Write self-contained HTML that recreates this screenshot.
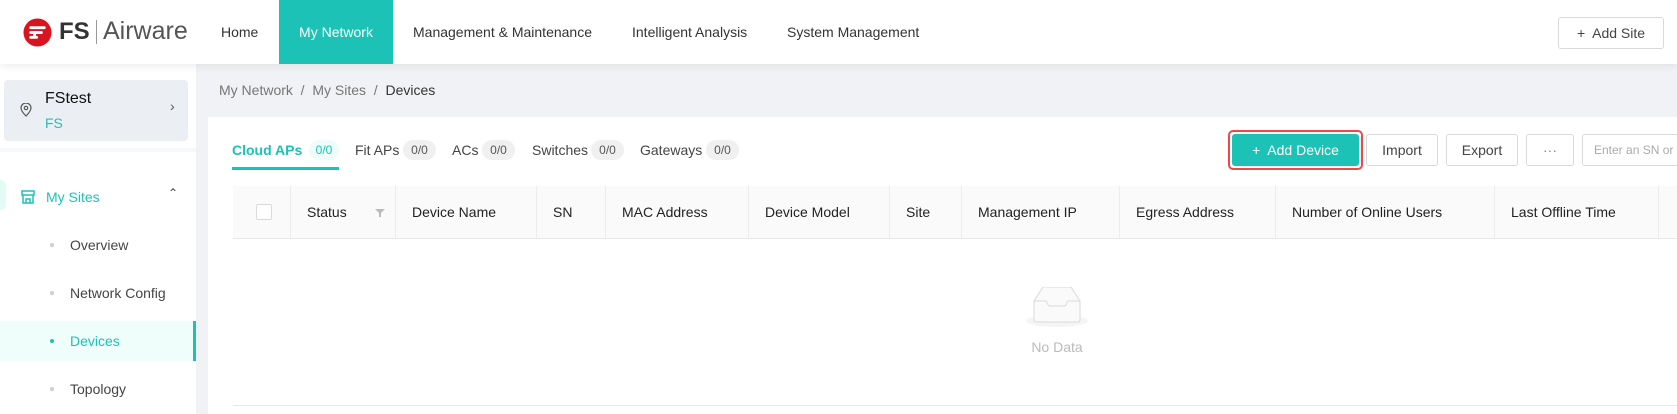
<!DOCTYPE html>
<html><head><meta charset="utf-8"><style>
*{box-sizing:border-box;margin:0;padding:0}
body{width:1677px;height:414px;overflow:hidden;background:#f0f2f5;font-family:"Liberation Sans",Arial,sans-serif;position:relative;color:#333}
.a{position:absolute}
.hdr{left:0;top:0;width:1677px;height:64px;background:#fff;box-shadow:0 2px 8px rgba(0,0,0,.08);z-index:3}
.nav{top:0;height:64px;line-height:64px;font-size:14px;color:#333}
.side{left:0;top:64px;width:196px;height:350px;background:#fff}
.card{left:208px;top:117px;width:1469px;height:297px;background:#fff}
.tab{top:140px;height:20px;line-height:20px;font-size:14px;color:#444}
.bdg{top:140px;height:20px;line-height:20px;font-size:12px;background:#f0f0f0;border-radius:10px;text-align:center;color:#555}
.btn{top:134px;height:32px;line-height:30px;border:1px solid #d9d9d9;border-radius:3px;background:#fff;text-align:center;font-size:14px;color:#444}
.th{top:186px;height:53px;line-height:53px;font-size:14px;color:#222;padding-left:16px;border-right:1px solid #ececec}
.mi{font-size:14px;color:#444}
.dot{width:4px;height:4px;border-radius:2px;background:#ccd;left:50px}
</style></head><body>
<div class="a hdr">
  <svg class="a" style="left:23px;top:18px" width="29" height="29" viewBox="0 0 30 30"><circle cx="15" cy="15" r="14.5" fill="#d7141f"/><path d="M8 10h14M8 15h11M8 20h6" stroke="#fff" stroke-width="3" stroke-linecap="round"/><path d="M12 15v6" stroke="#fff" stroke-width="3"/></svg>
  <div class="a" style="left:59px;top:18px;font-size:24px;font-weight:bold;color:#333;line-height:28px">FS</div>
  <div class="a" style="left:96px;top:20px;width:1px;height:24px;background:#999"></div>
  <div class="a" style="left:103px;top:17px;font-size:25px;color:#555;line-height:28px">Airware</div>
  <div class="a nav" style="left:221px">Home</div>
  <div class="a nav" style="left:279px;width:114px;background:#1cc2b5;color:#fff;text-align:center">My Network</div>
  <div class="a nav" style="left:413px">Management &amp; Maintenance</div>
  <div class="a nav" style="left:632px">Intelligent Analysis</div>
  <div class="a nav" style="left:787px">System Management</div>
  <div class="a btn" style="left:1558px;top:17px;width:106px;height:32px;line-height:30px">+&nbsp; Add Site</div>
</div>
<div class="a side">
  <div class="a" style="left:4px;top:16px;width:184px;height:61px;background:#ebeff3;border-radius:4px"></div>
  <svg class="a" style="left:20px;top:39px" width="12" height="14" viewBox="0 0 12 14"><path d="M6 13C2 9 1 7 1 5a5 5 0 0110 0c0 2-1 4-5 8z" fill="none" stroke="#555" stroke-width="1.2"/><circle cx="6" cy="5" r="1.7" fill="none" stroke="#555" stroke-width="1.2"/></svg>
  <div class="a" style="left:45px;top:26px;font-size:16px;color:#111">FStest</div>
  <div class="a" style="left:45px;top:51px;font-size:14px;color:#1cc2b5">FS</div>
  <div class="a" style="left:170px;top:34px;font-size:14px;color:#555">&#8250;</div>
  <div class="a" style="left:0;top:84px;width:196px;height:4px;background:#f7f8fa"></div>
  <svg class="a" style="left:21px;top:126px" width="14" height="14" viewBox="0 0 14 14"><path d="M1 1h12v4H1zM2 5v8h10V5M5 13V9h4v4" fill="none" stroke="#1cc2b5" stroke-width="1.5"/></svg>
  <div class="a" style="left:46px;top:125px;font-size:14px;color:#1cc2b5">My Sites</div>
  <div class="a" style="left:168px;top:122px;font-size:12px;color:#444">&#8963;</div>
  <div class="a dot" style="top:179px"></div><div class="a mi" style="left:70px;top:173px">Overview</div>
  <div class="a dot" style="top:227px"></div><div class="a mi" style="left:70px;top:221px">Network Config</div>
  <div class="a" style="left:0;top:257px;width:196px;height:40px;background:#effdfb"></div>
  <div class="a" style="left:193px;top:257px;width:3px;height:40px;background:#1cc2b5"></div>
  <div class="a dot" style="top:275px;background:#1cc2b5"></div><div class="a mi" style="left:70px;top:269px;color:#1cc2b5">Devices</div>
  <div class="a dot" style="top:323px"></div><div class="a mi" style="left:70px;top:317px">Topology</div>
</div>
<div class="a" style="left:0;top:180px;width:6px;height:30px;border-radius:0 15px 15px 0;background:#e2fbf5"></div>
<div class="a" style="left:219px;top:82px;font-size:14px;color:#777">My Network &nbsp;/&nbsp; My Sites &nbsp;/&nbsp; <span style="color:#333">Devices</span></div>
<div class="a card"></div>
<div class="a tab" style="left:232px;color:#1cc2b5;font-weight:bold">Cloud APs</div>
<div class="a bdg" style="left:309px;width:30px;background:#eefcfa;color:#1cc2b5">0/0</div>
<div class="a" style="left:232px;top:167px;width:107px;height:3px;background:#1cc2b5"></div>
<div class="a tab" style="left:355px">Fit APs</div><div class="a bdg" style="left:403px;width:33px">0/0</div>
<div class="a tab" style="left:452px">ACs</div><div class="a bdg" style="left:482px;width:33px">0/0</div>
<div class="a tab" style="left:532px">Switches</div><div class="a bdg" style="left:591px;width:33px">0/0</div>
<div class="a tab" style="left:640px">Gateways</div><div class="a bdg" style="left:706px;width:33px">0/0</div>
<div class="a" style="left:1228px;top:130px;width:135px;height:40px;border:2px solid #f0474a;border-radius:5px"></div>
<div class="a btn" style="left:1232px;width:127px;background:#1cc2b5;border-color:#1cc2b5;color:#fff">+&nbsp; Add Device</div>
<div class="a btn" style="left:1366px;width:72px">Import</div>
<div class="a btn" style="left:1446px;width:72px">Export</div>
<div class="a btn" style="left:1526px;width:48px;color:#888">···</div>
<div class="a btn" style="left:1582px;width:120px;text-align:left;padding-left:11px;font-size:12px;color:#aaa">Enter an SN or</div>
<div class="a" style="left:233px;top:186px;width:1444px;height:53px;background:#fafafa;border-bottom:1px solid #e8e8e8"></div>
<div class="a th" style="left:233px;width:58px"><div style="position:absolute;left:23px;top:18px;width:16px;height:16px;border:1px solid #d9d9d9;border-radius:2px;background:#fff"></div></div>
<div class="a th" style="left:291px;width:105px">Status<svg style="position:absolute;left:84px;top:22px" width="10" height="10" viewBox="0 0 10 10"><path d="M0 1h10L6 5v4H4V5z" fill="#bbb"/></svg></div>
<div class="a th" style="left:396px;width:141px">Device Name</div>
<div class="a th" style="left:537px;width:69px">SN</div>
<div class="a th" style="left:606px;width:143px">MAC Address</div>
<div class="a th" style="left:749px;width:141px">Device Model</div>
<div class="a th" style="left:890px;width:72px">Site</div>
<div class="a th" style="left:962px;width:158px">Management IP</div>
<div class="a th" style="left:1120px;width:156px">Egress Address</div>
<div class="a th" style="left:1276px;width:219px">Number of Online Users</div>
<div class="a th" style="left:1495px;width:164px">Last Offline Time</div>
<svg class="a" style="left:1025px;top:287px" width="64" height="42" viewBox="0 0 64 42"><ellipse cx="32" cy="34" rx="31" ry="6" fill="#f5f5f5"/><path d="M9 14L18 0h28l9 14v19a2 2 0 01-2 2H11a2 2 0 01-2-2z" fill="#fafafa" stroke="#d9d9d9"/><path d="M9 14h12c1 0 1 5 4 5h14c3 0 3-5 4-5h12" fill="none" stroke="#d9d9d9"/></svg>
<div class="a" style="left:1017px;top:339px;width:80px;text-align:center;font-size:14px;color:#bbb">No Data</div>
<div class="a" style="left:233px;top:405px;width:1444px;height:1px;background:#e8e8e8"></div>
</body></html>
